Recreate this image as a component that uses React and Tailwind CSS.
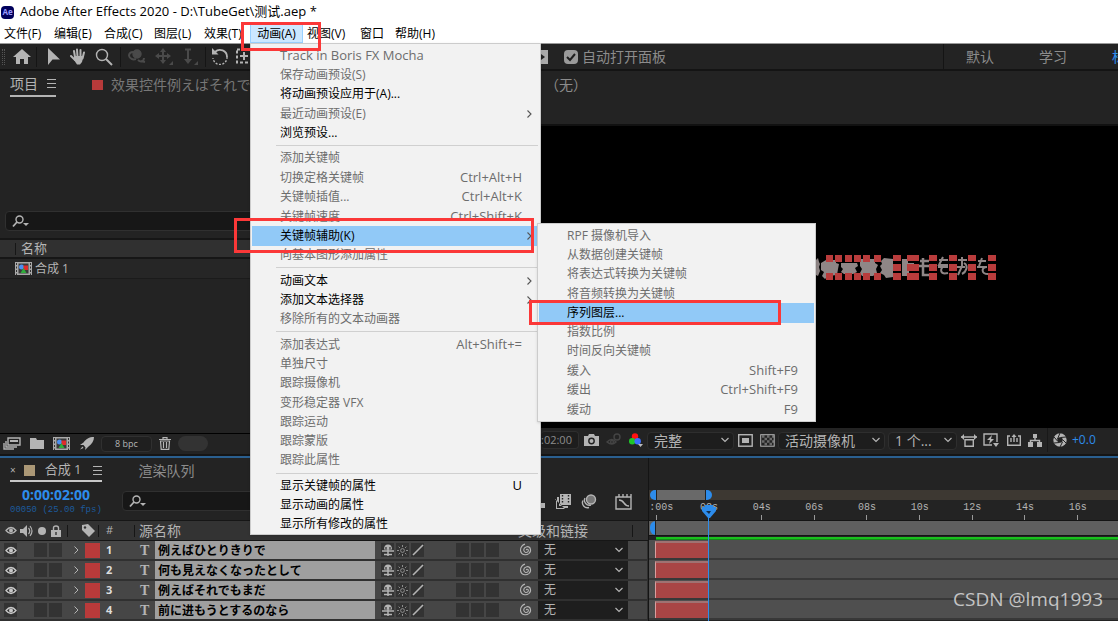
import React from "react";

const topMenus = [
  { label: "文件(F)", width: "w-[50px]" },
  { label: "编辑(E)", width: "w-[50px]" },
  { label: "合成(C)", width: "w-[50px]" },
  { label: "图层(L)", width: "w-[50px]" },
  { label: "效果(T)", width: "w-[50px]" },
  { label: "动画(A)", width: "w-[53px]", open: true },
  { label: "视图(V)", width: "w-[53px]" },
  { label: "窗口", width: "w-[35px]" },
  { label: "帮助(H)", width: "w-[52px]" },
];

const animationMenu = [
  { label: "Track in Boris FX Mocha", latin: true },
  { label: "保存动画预设(S)" },
  { label: "将动画预设应用于(A)...", on: true },
  { label: "最近动画预设(E)", arrow: true },
  { label: "浏览预设...", on: true },
  null,
  { label: "添加关键帧" },
  { label: "切换定格关键帧", keys: "Ctrl+Alt+H" },
  { label: "关键帧插值...", keys: "Ctrl+Alt+K" },
  { label: "关键帧速度...", keys: "Ctrl+Shift+K" },
  { label: "关键帧辅助(K)", on: true, arrow: true, active: true },
  { label: "向基本图形添加属性" },
  null,
  { label: "动画文本", on: true, arrow: true },
  { label: "添加文本选择器", on: true, arrow: true },
  { label: "移除所有的文本动画器" },
  null,
  { label: "添加表达式", keys: "Alt+Shift+=" },
  { label: "单独尺寸" },
  { label: "跟踪摄像机" },
  { label: "变形稳定器 VFX" },
  { label: "跟踪运动" },
  { label: "跟踪蒙版" },
  { label: "跟踪此属性" },
  null,
  { label: "显示关键帧的属性", on: true, keys: "U" },
  { label: "显示动画的属性", on: true },
  { label: "显示所有修改的属性", on: true },
];

const keyframeMenu = [
  { label: "RPF 摄像机导入" },
  { label: "从数据创建关键帧" },
  { label: "将表达式转换为关键帧" },
  { label: "将音频转换为关键帧" },
  { label: "序列图层...", on: true, active: true },
  { label: "指数比例" },
  { label: "时间反向关键帧" },
  { label: "缓入", keys: "Shift+F9" },
  { label: "缓出", keys: "Ctrl+Shift+F9" },
  { label: "缓动", keys: "F9" },
];

const layers = [
  "例えばひとりきりで",
  "何も見えなくなったとして",
  "例えばそれでもまだ",
  "前に进もうとするのなら",
];

const rulerMarks = [":00s", "02s", "04s", "06s", "08s", "10s", "12s", "14s", "16s"];

/* ---------- icons ---------- */

const Svg = ({ w = 16, h = 16, className = "", children }) => (
  <svg
    width={w}
    height={h}
    viewBox={`0 0 ${w} ${h}`}
    fill="none"
    stroke="currentColor"
    strokeWidth="1.4"
    className={`shrink-0 ${className}`}
    aria-hidden="true"
  >
    {children}
  </svg>
);

const ChevronDown = () => (
  <Svg w={10} h={6} className="pointer-events-none absolute right-1 top-1/2 -mt-[3px]">
    <path d="M1.500 1L5 4.500 8.500 1" strokeWidth="1.200" />
  </Svg>
);

const Burger = () => (
  <Svg w={9} h={9}>
    <path d="M0 .5h9M0 4.500h9M0 8.500h9" strokeWidth="1" />
  </Svg>
);

const SearchIcon = () => (
  <Svg w={18} h={13}>
    <circle cx="7.5" cy="4.5" r="3.5" />
    <path d="M5 7L1 11.5" strokeWidth="1.8" />
    <path d="M11 8h6l-3 3z" fill="currentColor" stroke="none" />
  </Svg>
);

const EyeIcon = () => (
  <Svg w={12} h={9}>
    <path d="M1 4.500Q6-1.500 11 4.500Q6 10.500 1 4.500z" strokeWidth="1.3" />
    <circle cx="6" cy="4.5" r="2" fill="currentColor" stroke="none" />
  </Svg>
);

const CompIcon = () => (
  <svg width="17" height="13" viewBox="0 0 17 13" className="shrink-0" aria-hidden="true">
    <rect width="17" height="13" fill="#a9a9a9" />
    <path d="M1.500 1v12M15.500 1v12" stroke="#333" strokeWidth="1" strokeDasharray="2 1.500" />
    <rect x="3.500" y="1.500" width="10" height="10" fill="#3a3a3a" />
    <circle cx="6.500" cy="5" r="2.500" fill="#4a8ff0" />
    <rect x="8.500" y="3.500" width="4.500" height="4.500" fill="#e02b2b" />
    <path d="M5.500 11l3-5 3 5z" fill="#2fae3b" />
  </svg>
);

const Swirl = () => (
  <Svg w={14} h={14}>
    <path
      d="M7.500 7.200c-.6-.8 1-1.500 1.700-.4.9 1.600-1.200 3.300-3 2.500C3.700 8 4.500 4.200 7.800 3.700c4-.4 5 4.500 2 6.900-3 2.200-7.800 1-8.300-3C1.200 4.300 3.500 1.600 6 1.100"
      strokeWidth="1.1"
    />
  </Svg>
);

const ShyIcon = () => (
  <Svg w={12} h={12}>
    <path d="M2 5.500Q2 .5 6 .5t4 5z" fill="currentColor" stroke="none" />
    <path d="M0 7h12M6 5v7M2 10.500h8" strokeWidth="1.5" />
    <path d="M4 3v2M8 3v2" stroke="#333" strokeWidth="1.200" />
  </Svg>
);

const SunIcon = () => (
  <Svg w={11} h={11} className="text-[#8c8c8c]">
    <circle cx="5.500" cy="5.500" r="1.900" strokeWidth="1" />
    <path
      d="M5.500 0v2M5.500 9v2M0 5.500h2M9 5.500h2M1.600 1.600L3 3M8 8l1.400 1.400M9.400 1.600L8 3M3 8L1.600 9.400"
      strokeWidth="1"
    />
  </Svg>
);

/* ---------- menus ---------- */

const MenuRow = ({ item, children }) => (
  <li className={`relative flex-1 ${item.active ? "bg-[#91c9f7]" : ""}`}>
    <button
      className={`flex h-full w-full items-center justify-between pl-7 pr-4 text-left ${
        item.on ? "text-black" : "text-[#6d6d6d]"
      }`}
    >
      <span className={item.latin ? "text-[13px]" : "text-[12px]"}>{item.label}</span>
      {item.keys && <span className="text-[13px]">{item.keys}</span>}
    </button>
    {item.arrow && (
      <Svg w={5} h={8} className="absolute right-[6px] top-1/2 -mt-1 text-[#555]">
        <path d="M.5.5L4 4 .5 7.500" strokeWidth="1.1" />
      </Svg>
    )}
    {children}
  </li>
);

const KeyframeSubmenu = () => (
  <ul className="absolute left-full top-0 z-10 -ml-px -mt-[3px] flex h-[199px] w-[279px] flex-col border border-[#ccc] bg-[#f2f2f2] px-px py-[2px] shadow">
    {keyframeMenu.map((item) => (
      <MenuRow key={item.label} item={item} />
    ))}
  </ul>
);

const AnimationMenu = () => (
  <ul className="absolute left-0 top-full z-20 flex h-[492px] w-[291px] flex-col border border-[#ccc] bg-[#f2f2f2] pl-px pr-[2px] pt-[2px] shadow">
    {animationMenu.map((item, i) =>
      item ? (
        <MenuRow key={item.label} item={item}>
          {item.active && <KeyframeSubmenu />}
        </MenuRow>
      ) : (
        <li key={i} className="flex h-[6px] items-center pl-6" role="separator">
          <span className="h-px w-full bg-[#d0d0d0]" />
        </li>
      )
    )}
  </ul>
);

const WindowHeader = () => (
  <header className="bg-white text-black">
    <div className="flex h-6 items-center gap-[6px] pl-px">
      <span className="flex h-[13px] w-[13px] items-center justify-center rounded-sm bg-[#00005b] text-[8px] font-bold text-[#9999ff]">
        Ae
      </span>
      <h1 className="text-[13px]">Adobe After Effects 2020 - D:\TubeGet\测试.aep *</h1>
    </div>
    <nav className="flex h-5 border-b border-[#999] text-[12px]">
      {topMenus.map((m) => (
        <div key={m.label} className={`relative ${m.width}`}>
          <button
            className={`h-[19px] w-full whitespace-nowrap ${
              m.open ? "border border-[#99d1ff] bg-[#cce8ff] text-center" : "pl-1 text-left"
            }`}
          >
            {m.label}
          </button>
          {m.open && <AnimationMenu />}
        </div>
      ))}
    </nav>
  </header>
);

/* ---------- tool bar ---------- */

const ToolSep = () => <span className="h-5 w-px bg-[#151515]" />;

const ToolBar = () => (
  <div className="flex h-[27px] items-center border-b-2 border-[#141414] text-[#b4b4b4]">
    <div className="flex w-[541px] shrink-0 items-center">
      <span className="ml-[2px] h-4 w-[3px] border-x border-dotted border-[#555]" />
      <button aria-label="主页" className="ml-[8px] mr-[5px]">
        <Svg w={18} h={16}>
          <path d="M9 0l9 8h-3v7h-4v-5H7v5H3V8H0z" fill="currentColor" stroke="none" />
        </Svg>
      </button>
      <ToolSep />
      <button aria-label="选取工具" className="ml-[10px]">
        <Svg w={14} h={17}>
          <path d="M1 0v17l4.500-5.500H13z" fill="currentColor" stroke="none" />
        </Svg>
      </button>
      <button aria-label="手形工具" className="ml-[9px]">
        <Svg w={17} h={17}>
          <path d="M4 3l1 6M7 1.500l.5 7M10.500 2v7M14 4.500l-1.500 6M1 8l4 4" strokeWidth="2" strokeLinecap="round" />
          <path d="M4 8h9.500l-1.500 6-2 2.500H7L4 12z" fill="currentColor" stroke="none" />
        </Svg>
      </button>
      <button aria-label="缩放工具" className="ml-2">
        <Svg w={18} h={18}>
          <circle cx="7" cy="7" r="5.500" />
          <path d="M11 11l6 6" strokeWidth="2" />
        </Svg>
      </button>
      <span className="ml-[7px] mr-[7px] flex">
        <ToolSep />
      </span>
      <span className="flex gap-2 text-[#4a4a4a]">
        <Svg w={19} h={17}>
          <circle cx="9" cy="6" r="4" fill="currentColor" />
          <path d="M1 8c0-4 4-5 7-3M1 8c1 3 4 4 7 3M10 12c3 3 6 1 6-2M13 13l4 1" strokeWidth="2" />
        </Svg>
        <Svg w={18} h={17}>
          <path d="M8 2v13M2 8h13" strokeWidth="2" />
          <path d="M8 0l3 4H5zM8 16l3-4H5zM0 8l4-3v6zM16 8l-4-3v6zM18 13v4h-4z" fill="currentColor" stroke="none" />
        </Svg>
        <Svg w={18} h={17}>
          <path d="M7 1v13M4 1.500h6" strokeWidth="2" />
          <path d="M7 16l4-5H3zM17 13v4h-4z" fill="currentColor" stroke="none" />
        </Svg>
      </span>
      <span className="ml-[6px] mr-[5px] flex">
        <ToolSep />
      </span>
      <Svg w={18} h={17}>
        <path d="M4 4a7 7 0 0 1 12 5" strokeWidth="1.800" />
        <path d="M16 9a7 7 0 0 1-14 1" strokeDasharray="2 1.500" />
        <path d="M1 0v6.500h6.500z" fill="currentColor" stroke="none" />
      </Svg>
      <Svg w={18} h={17} className="ml-[7px]">
        <rect x="1" y="1.500" width="14" height="13" strokeDasharray="3 2" strokeWidth="2" />
        <path d="M8 4v8M4 8h8" strokeWidth="2" />
      </Svg>
    </div>
    <Svg w={7} h={14}>
      <path d="M0 0h7v14H0z" fill="#aaa" stroke="none" />
      <path d="M0 4l4 3-4 3z" fill="#222" stroke="none" />
    </Svg>
    <label className="ml-4 flex items-center gap-1 text-[14px] text-[#8c8c8c]">
      <span className="relative flex">
        <input type="checkbox" defaultChecked className="h-[14px] w-[14px] appearance-none rounded-sm bg-[#9a9a9a]" />
        <Svg w={14} h={14} className="pointer-events-none absolute left-0 top-0 text-[#1e1e1e]">
          <path d="M3 7l3 3 5-6" strokeWidth="2" />
        </Svg>
      </span>
      自动打开面板
    </label>
    <div className="ml-auto flex h-full w-[175px] shrink-0 items-center gap-[45px] overflow-hidden whitespace-nowrap border-l border-[#141414] pl-[22px] text-[14px] text-[#8c8c8c]">
      <button>默认</button>
      <button>学习</button>
      <button className="text-[#2d8ceb]">标准</button>
    </div>
  </div>
);

/* ---------- project panel ---------- */

const ProjectPanel = () => (
  <section className="flex w-[541px] shrink-0 flex-col bg-[#232323] text-[14px] text-[#b4b4b4]">
    <div className="flex h-[26px] items-center pl-[10px] pt-px">
      <button className="flex h-full items-center gap-[9px] border-b-2 border-[#b4b4b4]">
        项目 <Burger />
      </button>
      <span className="ml-9 h-[10px] w-[11px] bg-[#b73a3a]" />
      <span className="ml-2 text-[#777]">效果控件例えばそれで</span>
    </div>
    <div className="mt-auto ml-[5px] flex h-5 items-center gap-1 rounded-sm border border-[#303030] bg-[#171717] pl-[6px]">
      <SearchIcon />
      <input aria-label="搜索" className="min-w-0 flex-1 bg-transparent outline-none" />
    </div>
    <div className="mt-[7px] flex h-[21px] items-center border-y-2 border-[#161616] bg-[#303030] pl-[15px] text-[13px]">
      <span className="mr-[5px] h-3 w-px bg-[#161616]" />
      名称
    </div>
    <div className="flex h-5 items-center gap-[3px] border-b border-[#1b1b1b] bg-[#262626] pl-[15px] text-[12px]">
      <CompIcon />
      合成 1
    </div>
    <div className="h-[154px]" />
    <div className="flex h-[20px] items-center border-t border-black pl-[3px]">
      <Svg w={18} h={13}>
        <path d="M5 1h12v7H5z M3 4v6h11M1 6v6h10" />
        <path d="M7 4h8" strokeWidth="2" />
      </Svg>
      <Svg w={14} h={11} className="ml-[9px]">
        <path d="M0 0h6l1 2h7v9H0z" fill="currentColor" stroke="none" />
      </Svg>
      <span className="ml-[9px]">
        <CompIcon />
      </span>
      <Svg w={14} h={13} className="ml-[10px]">
        <path d="M14 0C9 0 6 2 3.500 5.500L0 8h3.500l2 2.500L5 13l3.500-3.500C12 7 14 4 14 0zM2.500 9.500L0 12.500l3.500-1.500z" fill="currentColor" stroke="none" />
      </Svg>
      <button className="ml-[7px] h-4 w-[51px] rounded-sm border border-[#303030] bg-[#1f1f1f] text-[9px] leading-none">
        8 bpc
      </button>
      <button aria-label="删除" className="ml-[7px]">
        <Svg w={12} h={13}>
          <path d="M0 2.500h12M4 2V.7h4V2M1.500 4h9l-.7 8.300H2.200zM4.500 5v6M7.500 5v6" strokeWidth="1.200" />
        </Svg>
      </button>
      <span className="ml-[7px] h-[15px] w-[30px] rounded-full bg-[#333]" />
    </div>
    <div className="h-px" />
  </section>
);

/* ---------- viewer ---------- */

const ViewSelect = ({ label, options, width }) => (
  <span className={`relative ${width}`}>
    <select
      aria-label={label}
      className="h-[18px] w-full appearance-none rounded-sm border border-[#2e2e2e] bg-[#1d1d1d] pl-[6px] text-[14px] leading-4 text-[#b4b4b4]"
    >
      {options.map((o) => (
        <option key={o}>{o}</option>
      ))}
    </select>
    <ChevronDown />
  </span>
);

// selected text layers overlapping each other, with their corner handles
const LayerText = () => {
  const edges = [10, 19, 29, 38, 47, 58];
  const full = [77, 91, 113, 133, 152, 172];
  return (
    <svg width="182" height="28" viewBox="0 0 182 28" aria-hidden="true">
      <g fill="#8f8686">
        <path d="M0 6l2-2 1 4 1 2-1 3 1 4-2 5-2-1z" />
        <path d="M5 9l5-3h10v3l3 1-1 5-1 6-9 1-3 3-3-3 2-4-3-2z" />
        <path d="M25 9h16l1 3-3 2 2 4-4 2H28l-3-2 2-3-2-2z" />
        <path d="M44 5h15v4l3 2-2 4 1 4-4 3H46l-2-3 2-4-2-3z" />
        <path d="M65 7l3-3 9 1v18l-7 1-2-3-4-2 2-3-2-4 2-2z" />
        <path d="M86 5h6v4h6v3h-5v10h-7z" />
      </g>
      <g stroke="#8f8686" strokeWidth="2.500" fill="none">
        <path d="M104 7h9M107 4v10M103 12h10M107 14v7h7" />
        <path d="M123 6h9M127 3l-4 8h9M122 13h10M129 11c-6 4-5 10 3 8" strokeWidth="2" />
        <path d="M142 6h9M146 3v9l-4 9M148 9c5 3 2 9-2 11M141 13h8" strokeWidth="2" />
        <path d="M162 7h8M166 4l-3 8M161 13h10c-6 0-6 7 1 7" strokeWidth="2" />
      </g>
      <g fill="#b93c3c">
        {edges.map((x) => (
          <g key={x}>
            <rect x={x} y="1" width="7" height="7" />
            <rect x={x} y="19" width="7" height="7" />
          </g>
        ))}
        {full.map((x, i) => (
          <g key={x}>
            <rect x={x} y="1" width={i === 1 ? 12 : 8} height="6" />
            <rect x={x} y="10" width={i === 1 ? 12 : 8} height="7" />
            <rect x={x} y="19" width={i === 1 ? 12 : 8} height="7" />
          </g>
        ))}
      </g>
    </svg>
  );
};

const Viewer = () => (
  <section className="flex min-w-0 flex-1 flex-col bg-[#232323] text-[14px] text-[#b4b4b4]">
    <div className="h-[53px] pl-[4px] pt-[3px] text-[#8c8c8c]">（无）</div>
    <div className="flex flex-1 items-center border-t-2 border-[#111] bg-black pl-[275px]">
      <div className="-mt-[18px]">
        <LayerText />
      </div>
    </div>
    <div className="flex h-6 items-center overflow-hidden">
      <button className="h-[18px] w-[38px] rounded-sm border border-l-0 border-[#2e2e2e] bg-[#1d1d1d] text-left text-[11px] leading-4 text-[#8c8c8c]">
        :02:00
      </button>
      <Svg w={15} h={12} className="ml-[5px]">
        <path d="M0 2h4l1-2h5l1 2h4v10H0z" fill="currentColor" stroke="none" />
        <circle cx="7.500" cy="7" r="2.700" stroke="#222" />
      </Svg>
      <Svg w={16} h={14} className="ml-[7px] text-[#444]">
        <circle cx="11" cy="4" r="3" />
        <path d="M1 9Q6 4 10 9Q6 13 1 9z" />
        <circle cx="6" cy="9" r="1.500" />
      </Svg>
      <svg width="14" height="14" viewBox="0 0 14 14" className="ml-[7px] mr-1 shrink-0" aria-hidden="true">
        <circle cx="6" cy="3.500" r="3.200" fill="#f11" />
        <circle cx="3.200" cy="8.200" r="3.200" fill="#1fc52a" />
        <circle cx="8.700" cy="8.200" r="3.200" fill="#3b6dff" />
        <path d="M9 11h5l-2.500 3z" fill="#bbb" />
      </svg>
      <ViewSelect label="分辨率" options={["完整", "二分之一"]} width="w-[87px]" />
      <Svg w={15} h={13} className="ml-1">
        <rect x=".7" y=".7" width="13.500" height="11.500" />
        <rect x="4" y="4" width="7" height="5" fill="currentColor" stroke="none" />
      </Svg>
      <Svg w={15} h={13} className="ml-[7px] mr-[3px]">
        <rect x=".7" y=".7" width="13.500" height="11.500" strokeWidth="1" />
        <path d="M2 2.500h12M2 7.500h12" strokeWidth="2.500" strokeDasharray="2.500 2.500" opacity=".5" />
        <path d="M4.500 5h9M4.500 10h9" strokeWidth="2.500" strokeDasharray="2.500 2.500" opacity=".5" />
      </Svg>
      <ViewSelect label="3D 视图" options={["活动摄像机", "正面"]} width="w-[107px]" />
      <span className="w-[3px]" />
      <ViewSelect label="视图布局" options={["1 个...", "2 个..."]} width="w-[69px]" />
      <Svg w={16} h={13} className="ml-1">
        <path d="M0 3h16M4 5.700h8.300v6.600H4z" />
        <path d="M0 3l3-3v6zM16 3l-3-3v6z" fill="currentColor" stroke="none" />
      </Svg>
      <Svg w={16} h={14} className="ml-[6px]">
        <path d="M9 12H1V1h13v8" />
        <path d="M9 2L4 7h3l-1 4 5-5H8zM10 10h6l-3 4z" fill="currentColor" stroke="none" />
      </Svg>
      <Svg w={14} h={13} className="ml-2">
        <path d="M3 2H.7v9.300h12.600V2H11M4 4v4M7 2v6M10 4v4" />
        <path d="M4.500 3L7 0l2.500 3z" fill="currentColor" stroke="none" />
      </Svg>
      <Svg w={14} h={13} className="ml-[7px]">
        <path d="M5 0h4v4H5zM0 8h5v5H0zM9 8h5v5H9z" fill="currentColor" stroke="none" />
        <path d="M7 4v3M2.500 9V6.500h9V9" />
      </Svg>
      <span className="mx-[5px] h-full w-px bg-[#191919]" />
      <Svg w={14} h={14}>
        <circle cx="7" cy="7" r="4.700" strokeWidth="4" />
        <path d="M7 0L4.500 6M13 4L7.500 4.500M13 10L9.500 6.500M7 14l2.500-5M1 10l5.500-.5M1 4l3.500 4" stroke="#222" strokeWidth="1" />
      </Svg>
      <button className="ml-[5px] text-[12px] text-[#2d8ceb]">+0.0</button>
    </div>
    <div className="h-[2px]" />
  </section>
);

/* ---------- timeline ---------- */

const Box = ({ children }) => (
  <span className="flex h-[14px] w-[13px] items-center justify-center bg-[#333]">{children}</span>
);

const LayerRow = ({ name, index }) => (
  <div className="flex h-5 items-center border-b-2 border-[#303030] bg-[#464646]">
    <button aria-label="显示图层" className="ml-1 text-[#c8c8c8]">
      <Box>
        <EyeIcon />
      </Box>
    </button>
    <span className="ml-[17px] flex gap-[2px]">
      <Box />
      <Box />
    </span>
    <Svg w={5} h={8} className="ml-[12px]">
      <path d="M.5.5L4 4 .5 7.500" strokeWidth="1" />
    </Svg>
    <span className="ml-[6px] h-[15px] w-[15px] bg-[#b93a3a]" />
    <span className="w-[37px] pl-[6px] text-[11px] font-bold text-[#ddd]">{index}</span>
    <span className="w-[18px] pl-[3px] font-['Liberation_Serif',serif] text-[14px] font-bold">T</span>
    <span className="flex h-[18px] w-[220px] items-center bg-[#9f9f9f] pl-[3px] font-['Noto_Sans_CJK_JP',sans-serif] text-[12px] font-bold text-black">
      {name}
    </span>
    <span className="ml-[6px] flex gap-[2px]">
      <Box>
        <ShyIcon />
      </Box>
      <Box>
        <SunIcon />
      </Box>
      <Box>
        <Svg w={12} h={12}>
          <path d="M1 11L11 1" strokeWidth="1.600" />
        </Svg>
      </Box>
    </span>
    <span className="ml-8 flex gap-[2px]">
      <Box />
      <Box />
      <Box />
    </span>
    <span className="ml-[20px] mr-[5px]">
      <Swirl />
    </span>
    <span className="relative flex w-[90px]">
      <select
        aria-label={`父级 ${index}`}
        className="h-[18px] w-full appearance-none bg-[#1e1e1e] pl-[6px] text-[12px] leading-4 text-[#b4b4b4]"
      >
        <option>无</option>
      </select>
      <ChevronDown />
    </span>
    <span className="ml-auto h-full w-px bg-[#303030]" />
  </div>
);

const LayerPane = () => (
  <div className="w-[649px] shrink-0 border-r border-[#141414]">
    <div className="flex h-6 items-center pl-[10px] text-[14px]">
      <button className="flex h-full items-center border-b-2 border-[#c8c8c8] pt-[2px]">
        <span className="text-[10px]">×</span>
        <span className="mx-[8px] h-[11px] w-[11px] bg-[#ab9876]" />
        <span className="ml-[2px] mr-[11px] text-[13px]">合成 1</span>
        <Burger />
      </button>
      <button className="ml-[37px] text-[#8c8c8c]">渲染队列</button>
    </div>
    <div className="flex h-[38px] items-center">
      <div className="w-[122px] pl-[10px] pt-px">
        <div className="pl-3 text-[14px] font-bold leading-4 text-[#2d8ceb]">0:00:02:00</div>
        <div className="whitespace-nowrap font-['Liberation_Mono',monospace] text-[9px] leading-[14px] text-[#1c5a9c]">
          00050 (25.00 fps)
        </div>
      </div>
      <div className="flex h-5 w-[260px] items-center gap-1 rounded-sm border border-[#303030] bg-[#171717] pl-[6px]">
        <SearchIcon />
        <input aria-label="搜索图层" className="min-w-0 flex-1 bg-transparent outline-none" />
      </div>
      <div className="ml-auto flex items-center pr-[15px] pt-px">
        <Svg w={8} h={8} className="mr-[10px] mt-1">
          <path d="M0 3h8v5H0z" fill="currentColor" stroke="none" />
        </Svg>
        <Svg w={16} h={15}>
          <path d="M5 0h11v11H5zM2 3h2v9h9v2H2zM0 5h1v10h9" fill="currentColor" stroke="none" />
          <path d="M7.500 1v9M13.500 1v9" stroke="#222" strokeDasharray="1.500 1.500" />
        </Svg>
        <Svg w={16} h={15} className="ml-[10px]">
          <circle cx="10" cy="5.500" r="4.500" fill="#777" />
          <path d="M4 4a5 5 0 0 0 6 7M2 6.500a5 5 0 0 0 6 7" />
        </Svg>
        <Svg w={18} h={16} className="ml-[18px]">
          <path d="M1 3h15v12H1zM4 6c6 0 4 6 10 6M4 3V0M8 3V0M12 3V0M16 3V0" />
        </Svg>
      </div>
    </div>
    <div className="flex h-[21px] items-center border-y border-[#161616] bg-[#333] text-[13px]">
      <span className="flex w-[67px] items-center gap-[3px] pl-[5px]">
        <EyeIcon />
        <Svg w={13} h={12}>
          <path d="M0 4h3l4-4v12L3 8H0z" fill="currentColor" stroke="none" />
          <path d="M8.500 3q2.500 3 0 6M10 1q4 5 0 10" strokeWidth="1.200" />
        </Svg>
        <span className="mx-[2px] h-2 w-2 shrink-0 rounded-full bg-[#b4b4b4]" />
        <Svg w={10} h={12}>
          <path d="M2.500 5V3Q2.500 1 5 1t2.500 2v2" />
          <path d="M0 5h10v7H0z" fill="currentColor" stroke="none" />
          <path d="M5 7v3" stroke="#333" />
        </Svg>
      </span>
      <span className="flex h-3 w-8 items-center border-x border-[#161616] pl-[14px]">
        <Svg w={13} h={13}>
          <path d="M0 1l6-1 7 7-6 6-7-7z" fill="currentColor" stroke="none" />
          <circle cx="3" cy="3.500" r="1.200" fill="#333" stroke="none" />
        </Svg>
      </span>
      <span className="w-[35px] pl-[7px] text-[11px]">#</span>
      <span className="border-l border-[#161616] pl-1 text-[14px] leading-3">源名称</span>
      <span className="ml-auto w-[114px] text-[14px]">父级和链接</span>
      <span className="mr-[15px] h-3 w-px bg-[#161616]" />
    </div>
    {layers.map((name, i) => (
      <LayerRow key={name} name={name} index={i + 1} />
    ))}
  </div>
);

const TrackPane = () => (
  <div className="relative min-w-0 flex-1 overflow-hidden pt-8">
    <div className="flex h-[10px] bg-[#3d3832] pl-px">
      <span className="w-[6px] rounded-l-full bg-[#2d8ceb]" />
      <span className="w-[50px] border-x border-[#222] bg-[#696969]" />
      <span className="w-[6px] rounded-r-full bg-[#2d8ceb]" />
    </div>
    <div className="-ml-[19px] mr-[14px] grid h-[20px] grid-cols-9 font-['Liberation_Mono',monospace] text-[10px] leading-[15px] text-[#b4b4b4]">
      {rulerMarks.map((m, i) => (
        <div key={m} className="flex flex-col items-center">
          <span className={i === 0 ? "pl-[10px]" : ""}>{m}</span>
          <span className="h-[5px] w-px bg-[#999]" />
        </div>
      ))}
    </div>
    <div className="flex h-4 border-y border-[#141414] bg-[#5f5f5f] pl-px">
      <span className="w-[6px] rounded-l-full border-r border-[#222] bg-[#2d8ceb]" />
    </div>
    <div className="ml-[7px] h-[4px] border-y border-t-[#222] border-b-[#128a16] bg-[#1abf1f]" />
    {layers.map((name) => (
      <div key={name} className="h-5 border-b-2 border-[#383838] bg-[#4f4f4f] pl-[6px] pt-px">
        <div className="h-[17px] w-[53px] border-l border-t-2 border-l-[#d8a0a0] border-t-[#a07272] bg-[#a94545]" />
      </div>
    ))}
    <span className="absolute bottom-0 left-[59px] top-[60px] w-px bg-[#2d8ceb]" />
    <Svg w={14} h={14} className="absolute left-[53px] top-[47px]">
      <path d="M3 0h8v2h3v4l-6 7H6L0 6V2h3z" fill="#2d8ceb" stroke="none" />
      <path d="M4 6h5L7 9z" fill="#142c48" stroke="none" />
    </Svg>
  </div>
);

const App = () => (
  <main className="relative flex min-h-screen flex-col overflow-hidden bg-[#232323] font-[family-name:'Open_Sans','Noto_Sans_CJK_SC',sans-serif]">
    <WindowHeader />
    <ToolBar />
    <div className="flex flex-1 border-b-2 border-[#151515]">
      <ProjectPanel />
      <Viewer />
    </div>
    <section className="flex border-t-2 border-[#2a5f8f] text-[#b4b4b4]">
      <LayerPane />
      <TrackPane />
    </section>

    {/* highlight frames */}
    <span className="pointer-events-none absolute left-[241px] top-[22px] z-30 h-[29px] w-20 border-[3px] border-[#fb3838]" />
    <span className="pointer-events-none absolute left-[234px] top-[218px] z-30 h-[35px] w-[300px] border-[3px] border-[#fb3838]" />
    <span className="pointer-events-none absolute left-[529px] top-[300px] z-30 h-[25px] w-[252px] border-[3px] border-[#fb3838]" />
    <span className="pointer-events-none absolute bottom-2 right-[15px] text-[19px] leading-7 text-[#c4c4c4]">
      CSDN @lmq1993
    </span>
  </main>
);

export default App;
